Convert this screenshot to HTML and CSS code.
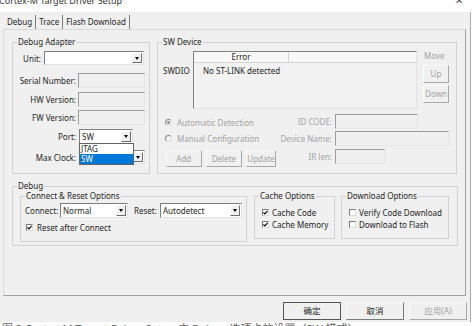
FILE: index.html
```html
<!DOCTYPE html>
<html>
<head>
    <meta charset="utf-8">
    <title>Cortex-M Target Driver Setup</title>
    <link rel="stylesheet" href="styles.css">
</head>
<body>
    <div class="titlebar">
        <span class="title">Cortex-M Target Driver Setup</span>
        <span class="close">✕</span>
    </div>
    <div class="window">
        <div class="tabs">
            <span class="tab active">Debug</span>
            <span class="tab">Trace</span>
            <span class="tab">Flash Download</span>
        </div>
        <div class="page">
            <div class="row-top">
                <fieldset class="group adapter">
                    <legend>Debug Adapter</legend>
                    <div class="field-row unit-row">
                        <span class="lbl lbl-unit">Unit:</span>
                        <div class="combo combo-unit"><span class="combo-text"></span><span class="combo-arrow"></span></div>
                    </div>
                    <div class="field-row serial-row">
                        <span class="lbl">Serial Number:</span>
                        <div class="tb tb-adapter"></div>
                    </div>
                    <div class="field-row hw-row">
                        <span class="lbl">HW Version:</span>
                        <div class="tb tb-adapter"></div>
                    </div>
                    <div class="field-row fw-row">
                        <span class="lbl">FW Version:</span>
                        <div class="tb tb-adapter"></div>
                    </div>
                    <div class="field-row port-row">
                        <span class="lbl">Port:</span>
                        <div class="combo combo-port">
                            <span class="combo-text">SW</span><span class="combo-arrow"></span>
                            <ul class="droplist">
                                <li>JTAG</li>
                                <li class="selected">SW</li>
                            </ul>
                        </div>
                    </div>
                    <div class="field-row clock-row">
                        <span class="lbl">Max Clock:</span>
                        <div class="combo combo-clock"><span class="combo-text"></span><span class="combo-arrow"></span></div>
                    </div>
                </fieldset>

                <fieldset class="group swdev">
                    <legend>SW Device</legend>
                    <div class="sw-top">
                        <div class="swdio">SWDIO</div>
                        <div class="list">
                            <div class="list-head">
                                <span class="col-error">Error</span>
                                <span class="col-rest"></span>
                            </div>
                            <div class="list-item">No ST-LINK detected</div>
                        </div>
                        <div class="side">
                            <div class="move">Move</div>
                            <button class="btn disabled btn-up">Up</button>
                            <button class="btn disabled btn-down">Down</button>
                        </div>
                    </div>
                    <div class="sw-bottom">
                        <div class="sw-left">
                            <div class="radio-row"><span class="radio on"></span>Automatic Detection</div>
                            <div class="radio-row"><span class="radio"></span>Manual Configuration</div>
                            <div class="sw-buttons">
                                <button class="btn disabled btn-add">Add</button>
                                <button class="btn disabled btn-delete">Delete</button>
                                <button class="btn disabled btn-update">Update</button>
                            </div>
                        </div>
                        <div class="sw-right">
                            <div class="id-row"><span class="id-lbl">ID CODE:</span><div class="tb tb-id"></div></div>
                            <div class="id-row name-row"><span class="id-lbl">Device Name:</span><div class="tb tb-name"></div></div>
                            <div class="id-row ir-row"><span class="id-lbl">IR len:</span><div class="tb tb-ir"></div></div>
                        </div>
                    </div>
                </fieldset>
            </div>

            <fieldset class="group debug">
                <legend>Debug</legend>
                <div class="debug-row">
                    <fieldset class="group connect">
                        <legend>Connect &amp; Reset Options</legend>
                        <div class="conn-row">
                            <span class="conn-lbl">Connect:</span>
                            <div class="combo combo-connect"><span class="combo-text">Normal</span><span class="combo-arrow"></span></div>
                            <span class="reset-lbl">Reset:</span>
                            <div class="combo combo-reset"><span class="combo-text">Autodetect</span><span class="combo-arrow"></span></div>
                        </div>
                        <div class="check-row reset-after"><span class="check"><svg width="5" height="5" viewBox="0 0 5 5"><path d="M0.4 2.4 L1.9 3.9 L4.6 0.8" fill="none" stroke="#000" stroke-width="1.1"/></svg></span>Reset after Connect</div>
                    </fieldset>
                    <fieldset class="group cache">
                        <legend>Cache Options</legend>
                        <div class="checks">
                            <div class="check-row"><span class="check"><svg width="5" height="5" viewBox="0 0 5 5"><path d="M0.4 2.4 L1.9 3.9 L4.6 0.8" fill="none" stroke="#000" stroke-width="1.1"/></svg></span>Cache Code</div>
                            <div class="check-row"><span class="check"><svg width="5" height="5" viewBox="0 0 5 5"><path d="M0.4 2.4 L1.9 3.9 L4.6 0.8" fill="none" stroke="#000" stroke-width="1.1"/></svg></span>Cache Memory</div>
                        </div>
                    </fieldset>
                    <fieldset class="group download">
                        <legend>Download Options</legend>
                        <div class="checks">
                            <div class="check-row"><span class="check"></span>Verify Code Download</div>
                            <div class="check-row"><span class="check"></span>Download to Flash</div>
                        </div>
                    </fieldset>
                </div>
            </fieldset>
        </div>
        <div class="footer">
            <button class="btn big default">确定</button>
            <button class="btn big">取消</button>
            <button class="btn big disabled">应用(A)</button>
        </div>
    </div>
    <div class="caption">图 3  Cortex-M Target Driver Setup 中 Debug 选项卡的设置（SW 模式）</div>
</body>
</html>
```

FILE: styles.css
```css
body {
    margin: 0;
    width: 474px;
    background: #fff;
    font-family: "Noto Sans", "Noto Sans CJK SC", sans-serif;
    font-size: 8px;
    line-height: 11px;
    color: #1e1e1e;
}
.titlebar {
    display: flex;
    justify-content: space-between;
    height: 12px;
    overflow: hidden;
    background: #fff;
}
.title {
    margin: -5px 0 0 -1px;
    font-size: 9px;
    line-height: 12px;
    color: #333;
}
.close {
    margin: -6px 11px 0 0;
    font-size: 10px;
    line-height: 12px;
    color: #444;
}
.window {
    width: 470px;
    height: 310px;
    background: #f0f0f0;
    border-right: 1px solid #a9a9a9;
}

/* tabs */
.tabs {
    display: flex;
    height: 17px;
    padding: 3px 0 0 4px;
    box-sizing: border-box;
}
.tab {
    height: 14px;
    padding: 0 3px;
    line-height: 14px;
    border-right: 1px solid #7d7d7d;
}
.page {
    height: 267px;
    margin: 0 4px 0 3px;
    padding: 7px 0 0 8px;
    box-sizing: border-box;
    border: 1px solid;
    border-color: #d9d9d9 #a0a0a0 #a0a0a0 #d9d9d9;
}

/* group boxes */
.group {
    margin: 0;
    padding: 0;
    min-width: 0;
    box-sizing: border-box;
    border: 1px solid #d2d2d2;
}
.group legend {
    margin-left: 4px;
    padding: 0 1px;
    line-height: 10px;
}
.row-top {
    display: flex;
    gap: 7px;
}
.adapter {
    width: 138px;
    height: 137px;
}
.swdev {
    width: 300px;
    height: 137px;
}
.debug {
    width: 446px;
    height: 65px;
    margin-top: 7px;
}

/* fields */
.field-row {
    display: flex;
    align-items: center;
    height: 15px;
}
.lbl {
    width: 63px;
    margin-right: 2px;
    text-align: right;
    white-space: nowrap;
}
.lbl-unit {
    width: 28px;
    margin-right: 3px;
}
.unit-row { margin-top: 4px; height: 14px; }
.serial-row { margin-top: 8px; }
.hw-row { margin-top: 4px; }
.fw-row { margin-top: 3px; }
.port-row { margin-top: 4px; }
.clock-row { margin-top: 6px; height: 14px; }

.tb {
    height: 15px;
    box-sizing: border-box;
    border: 1px solid;
    border-color: #9c9c9c #e6e6e6 #e6e6e6 #9c9c9c;
    background: #f0f0f0;
}
.tb-adapter { width: 67px; }
.tb-id { width: 83px; }
.tb-name { width: 114px; }
.tb-ir { width: 50px; }

.combo {
    position: relative;
    display: flex;
    height: 15px;
    box-sizing: border-box;
    border: 1px solid;
    border-color: #7f7f7f #e3e3e3 #e3e3e3 #7f7f7f;
    background: #fff;
}
.combo-text {
    flex: 1;
    padding-left: 2px;
    line-height: 13px;
    white-space: nowrap;
    overflow: hidden;
}
.combo-arrow {
    display: flex;
    align-items: center;
    justify-content: center;
    width: 10px;
    margin: 1px;
    box-sizing: border-box;
    border: 1px solid;
    border-color: #fff #6d6d6d #6d6d6d #fff;
    background: #f0f0f0;
}
.combo-arrow::after {
    content: "";
    border-left: 2.5px solid transparent;
    border-right: 2.5px solid transparent;
    border-top: 3px solid #000;
}
.combo-unit { width: 100px; height: 14px; }
.combo-port { width: 54px; margin-left: 1px; }
.combo-clock { width: 66px; height: 14px; margin-left: 1px; }
.combo-connect { width: 68px; }
.combo-reset { width: 82px; margin-left: 1px; }

.droplist {
    position: absolute;
    top: 13px;
    left: -1px;
    z-index: 2;
    width: 55px;
    margin: 0;
    padding: 0;
    list-style: none;
    box-sizing: border-box;
    border: 1px solid #646464;
    background: #fff;
}
.droplist li {
    height: 10px;
    padding-left: 1px;
    line-height: 10px;
}
.droplist li.selected {
    background: #0078d7;
    color: #fff;
}

/* SW device */
.sw-top {
    display: flex;
    margin-top: 4px;
}
.swdio {
    width: 35px;
    padding: 14px 0 0 5px;
    box-sizing: border-box;
}
.list {
    width: 224px;
    height: 58px;
    box-sizing: border-box;
    border: 1px solid;
    border-color: #828282 #e3e3e3 #e3e3e3 #828282;
    background: #f2f2f2;
}
.list-head {
    display: flex;
    height: 11px;
    box-sizing: border-box;
    border-bottom: 1px solid #d5d5d5;
    background: #f8f8f8;
    line-height: 10px;
}
.col-error {
    width: 95px;
    box-sizing: border-box;
    border-right: 1px solid #d5d5d5;
    text-align: center;
}
.list-item {
    padding: 2px 0 0 9px;
}
.side {
    width: 26px;
    margin-left: 6px;
}
.move {
    height: 11px;
    margin-top: -1px;
    padding-left: 1px;
    color: #a3a3a3;
}
.btn {
    display: block;
    height: 18px;
    padding: 0;
    box-sizing: border-box;
    border: 1px solid;
    border-color: #fafafa #7a7a7a #7a7a7a #fafafa;
    background: #f0f0f0;
    font: inherit;
    line-height: 16px;
    text-align: center;
    color: #1e1e1e;
}
.btn.disabled {
    color: #a3a3a3;
    border-color: #fafafa #a8a8a8 #a8a8a8 #fafafa;
}
.btn-up { width: 26px; margin-top: 4px; }
.btn-down { width: 26px; margin-top: 2px; }

.sw-bottom {
    display: flex;
    margin-top: 5px;
}
.sw-left {
    width: 118px;
    padding-left: 7px;
    box-sizing: border-box;
}
.radio-row {
    display: flex;
    align-items: center;
    height: 16px;
    color: #a3a3a3;
    white-space: nowrap;
}
.radio {
    display: flex;
    align-items: center;
    justify-content: center;
    width: 7px;
    height: 7px;
    margin-right: 5px;
    box-sizing: border-box;
    border: 1px solid;
    border-color: #8a8a8a #dedede #dedede #8a8a8a;
    border-radius: 50%;
    background: #f4f4f4;
}
.radio.on::after {
    content: "";
    width: 3px;
    height: 3px;
    border-radius: 50%;
    background: #8a8a8a;
}
.sw-buttons {
    display: flex;
    margin: 4px 0 0 1px;
}
.btn-add { width: 37px; height: 17px; }
.btn-delete { width: 38px; height: 17px; margin-left: 4px; }
.btn-update { width: 31px; height: 17px; margin-left: 4px; }

.sw-right {
    display: flex;
    flex-direction: column;
}
.id-row {
    display: flex;
    align-items: center;
    height: 15px;
}
.name-row { margin-top: 2px; }
.ir-row { margin-top: 3px; }
.id-lbl {
    width: 56px;
    margin-right: 3px;
    text-align: right;
    white-space: nowrap;
    color: #a3a3a3;
}

/* debug group */
.debug-row {
    display: flex;
    align-items: flex-start;
    padding-left: 7px;
}
.connect {
    width: 227px;
    height: 51px;
}
.cache {
    width: 81px;
    height: 48px;
    margin-left: 7px;
}
.download {
    width: 108px;
    height: 48px;
    margin-left: 6px;
}
.conn-row {
    display: flex;
    align-items: center;
    height: 15px;
    margin-top: 2px;
    padding-left: 4px;
}
.conn-lbl {
    width: 35px;
    white-space: nowrap;
}
.reset-lbl {
    width: 25px;
    margin-left: 6px;
}
.check-row {
    display: flex;
    align-items: center;
    height: 12px;
    white-space: nowrap;
}
.reset-after {
    height: 11px;
    margin-top: 4px;
    padding-left: 5px;
}
.reset-after .check {
    margin-right: 4px;
}
.checks {
    margin-top: 5px;
    padding-left: 7px;
}
.check {
    display: flex;
    align-items: center;
    justify-content: center;
    width: 7px;
    height: 7px;
    margin-right: 3px;
    box-sizing: border-box;
    border: 1px solid;
    border-color: #7a7a7a #dcdcdc #dcdcdc #7a7a7a;
    background: #fff;
}

/* footer */
.footer {
    display: flex;
    justify-content: flex-end;
    padding: 6px 3px 0 0;
}
.btn.big {
    width: 58px;
    font-size: 8.5px;
}
.btn.big + .btn.big {
    margin-left: 5px;
}
.btn.big.disabled {
    margin-left: 4px;
}
.btn.default {
    border-color: #555;
}
.caption {
    height: 4px;
    overflow: hidden;
    padding-left: 2px;
    font-size: 11px;
    line-height: 11px;
    color: #666;
    white-space: nowrap;
}
.caption::before {
    content: "";
    display: block;
    height: 1px;
}
```
